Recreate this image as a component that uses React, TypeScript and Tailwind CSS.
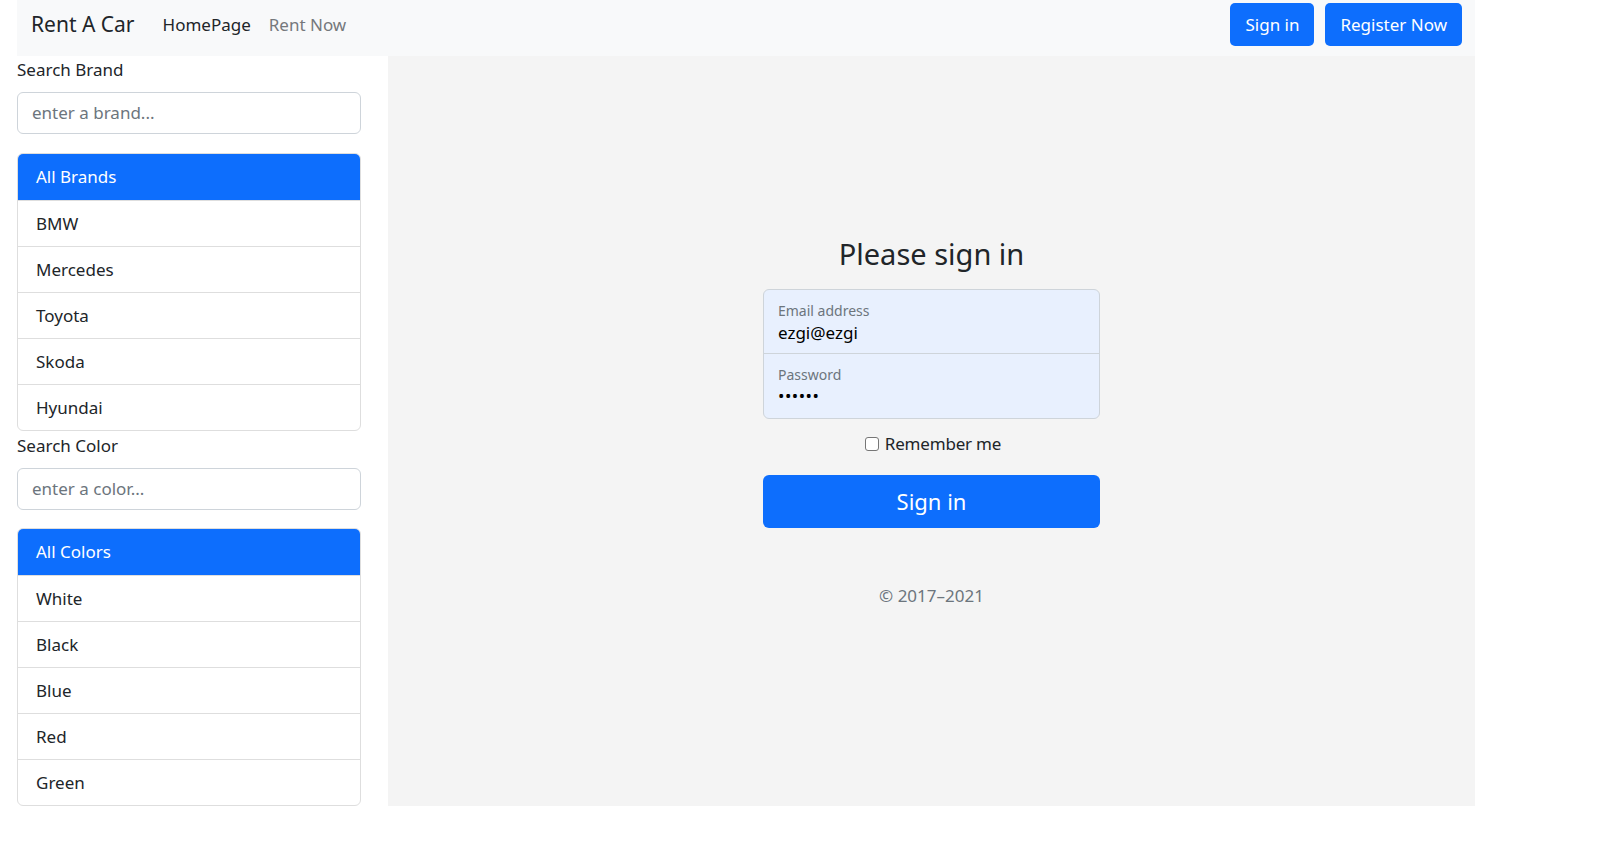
import React from "react";

const brands = ["BMW", "Mercedes", "Toyota", "Skoda", "Hyundai"];
const colors = ["White", "Black", "Blue", "Red", "Green"];

function FilterList({ all, items }: { all: string; items: string[] }) {
  return (
    <div className="flex flex-col rounded-[6px] border border-[#dedede] overflow-hidden bg-white">
      <div className="h-[47px] -mt-px -mx-px flex items-center pl-[19px] bg-[#0d6efd] text-white text-[17px]">
        {all}
      </div>
      {items.map((b) => (
        <div key={b} className="h-[46px] flex items-center pl-[18px] border-t border-[#dedede] text-[17px] text-[#212529]">
          {b}
        </div>
      ))}
    </div>
  );
}

export default function App() {
  return (
    <div className="min-h-[842px] bg-white" style={{ fontFamily: '"Noto Sans", sans-serif' }}>
      <div className="ml-[17px] w-[1458px]">
        <nav className="h-[56px] bg-[#f8f9fa] flex items-start">
          <span className="ml-[14px] mt-[9px] text-[21px] text-[#212529] leading-[30px]">Rent A Car</span>
          <span className="ml-[28px] mt-[12px] text-[17px] text-[#212529] leading-[26px]">HomePage</span>
          <span className="ml-[18px] mt-[12px] text-[17px] text-[#75787c] leading-[26px]">Rent Now</span>
          <div className="ml-auto mr-[13px] mt-[3px] flex gap-[11px]">
            <button className="h-[43px] px-[15px] rounded-[5px] bg-[#0d6efd] text-white text-[17px]">Sign in</button>
            <button className="h-[43px] px-[15px] rounded-[5px] bg-[#0d6efd] text-white text-[17px]">Register Now</button>
          </div>
        </nav>
        <div className="flex gap-[27px]">
          <div className="w-[344px] flex flex-col">
            <div className="mt-[1px] h-[26px] text-[17px] text-[#212529] leading-[26px]">Search Brand</div>
            <div className="mt-[9px] h-[42px] rounded-[6px] border border-[#ced4da] flex items-center px-[14px] text-[17px] text-[#6c757d]">
              enter a brand...
            </div>
            <div className="mt-[19px]">
              <FilterList all="All Brands" items={brands} />
            </div>
            <div className="mt-[2px] h-[26px] text-[17px] text-[#212529] leading-[26px]">Search Color</div>
            <div className="mt-[9px] h-[42px] rounded-[6px] border border-[#ced4da] flex items-center px-[14px] text-[17px] text-[#6c757d]">
              enter a color...
            </div>
            <div className="mt-[18px]">
              <FilterList all="All Colors" items={colors} />
            </div>
          </div>
          <div className="flex-1 h-[750px] bg-[#f4f4f4] flex flex-col items-center pt-[180px]">
            <h1 className="h-[36px] text-[29px] leading-[36px] text-[#212529]">Please sign in</h1>
            <div className="mt-[17px] w-[337px] rounded-[6px] border border-[#ced4da] bg-[#e8f0fe] flex flex-col">
              <div className="h-[63px] pl-[14px] pt-[12px] flex flex-col">
                <span className="text-[14px] leading-[18px] text-[#6c757d]">Email address</span>
                <span className="mt-[2px] text-[17px] leading-[22px] text-black">ezgi@ezgi</span>
              </div>
              <div className="h-[65px] pl-[14px] pt-[12px] border-t border-[#ced4da] flex flex-col">
                <span className="text-[14px] leading-[18px] text-[#6c757d]">Password</span>
                <span className="mt-[1px] text-[17px] leading-[22px] text-black tracking-[0.5px]">••••••</span>
              </div>
            </div>
            <div className="mt-[13px] h-[24px] flex items-center gap-[6px] pl-[3px]">
              <span className="w-[14px] h-[14px] rounded-[3px] border border-[#767676] bg-white" />
              <span className="text-[17px] text-[#212529] tracking-[-0.2px]">Remember me</span>
            </div>
            <button className="mt-[19px] w-[337px] h-[53px] rounded-[6px] bg-[#0d6efd] text-white text-[22px]">Sign in</button>
            <div className="mt-[57px] text-[17px] text-[#6c757d] leading-[22px]">© 2017–2021</div>
          </div>
        </div>
      </div>
    </div>
  );
}
